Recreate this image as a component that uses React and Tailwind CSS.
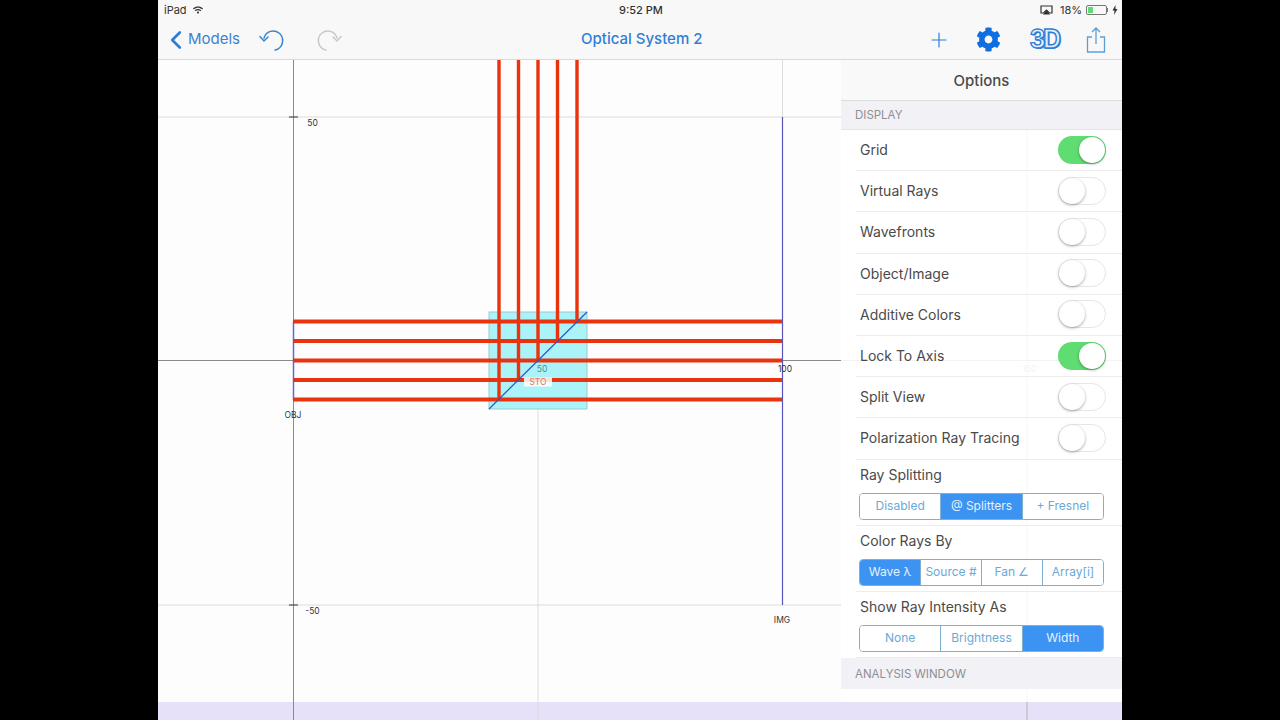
import React from "react";
import { FaCog, FaWifi } from "react-icons/fa";
import { ChevronLeft, Plus } from "lucide-react";

const rayY = [321.5, 341, 360.5, 380, 399.5];
const rayX = [
  { x: 499, end: 400 },
  { x: 518.5, end: 380 },
  { x: 538, end: 361 },
  { x: 557.5, end: 341 },
  { x: 577, end: 322 },
];

function Toggle({ on }) {
  return (
    <div className={on
      ? "relative h-[28px] w-[48px] rounded-full bg-[#5fdc72]"
      : "relative h-[28px] w-[48px] rounded-full border border-[#e6e6e6] bg-white"}>
      <div className={on
        ? "absolute right-[1px] top-[1px] h-[26px] w-[26px] rounded-full bg-white shadow-[0_1px_3px_rgba(0,0,0,0.35)]"
        : "absolute left-0 top-0 h-[26px] w-[26px] rounded-full bg-white shadow-[0_1px_3px_rgba(0,0,0,0.35)]"} />
    </div>
  );
}

function ToggleRow({ label, on }) {
  return (
    <div className="ml-[15px] flex h-[41.2px] items-center justify-between border-b border-[#ececec] pb-[1px] pl-[4px] pr-[16px]">
      <span className="text-[14px] text-[#4a4a4a]">{label}</span>
      <Toggle on={on} />
    </div>
  );
}

function Segments({ label, items, active }) {
  return (
    <div className="ml-[15px] flex h-[66px] flex-col border-b border-[#ececec] pl-[3px] pr-[18px]">
      <div className="flex h-[33px] items-center pb-[3px] pl-[1px] text-[14px] text-[#4a4a4a]">{label}</div>
      <div className="flex h-[27px] overflow-hidden rounded-[4px] border border-[#7fb0cf]">
        {items.map((item, i) => (
          <div
            key={item}
            className={
              (i === active ? "bg-[#3d93f2] text-[#e6f2ff] " : "bg-white text-[#6aa9d8] ") +
              (i > 0 ? "border-l border-[#7fb0cf] " : "") +
              "flex flex-1 items-center justify-center text-[12px]"
            }
          >
            {item}
          </div>
        ))}
      </div>
    </div>
  );
}

function Drawing() {
  return (
    <svg className="absolute inset-0 h-[660px] w-[964px]" viewBox="158 60 964 660">
      <rect x="158" y="60" width="964" height="660" fill="#fefdfe" />
      <rect x="158" y="702" width="964" height="18" fill="#e6e0f8" />

      {/* grid */}
      <g stroke="#dcdcdc" strokeWidth="1">
        <line x1="158" y1="117" x2="841" y2="117" />
        <line x1="158" y1="605" x2="841" y2="605" />
        <line x1="538" y1="60" x2="538" y2="720" />
        <line x1="782.5" y1="60" x2="782.5" y2="117" />
        <line x1="1027" y1="60" x2="1027" y2="720" stroke="#b4b4b4" />
      </g>
      <g stroke="#8a8a8a" strokeWidth="1">
        <line x1="293.5" y1="60" x2="293.5" y2="720" />
        <line x1="158" y1="360.5" x2="1122" y2="360.5" />
        <line x1="289" y1="117" x2="298" y2="117" stroke="#333" />
        <line x1="289" y1="605" x2="298" y2="605" stroke="#333" />
      </g>

      {/* beam splitter */}
      <rect x="489" y="312" width="98" height="97" fill="#aaf3f8" stroke="#9cc9cf" strokeWidth="1" />

      {/* object and image planes */}
      <line x1="293.5" y1="321" x2="293.5" y2="400" stroke="#6a62d8" strokeWidth="1.5" />
      <line x1="782.5" y1="117" x2="782.5" y2="605" stroke="#5a55b8" strokeWidth="1.2" />

      {/* rays */}
      <g stroke="#e8330e" strokeWidth="4.2">
        {rayX.map((r) => (
          <line key={r.x} x1={r.x} y1="60" x2={r.x} y2={r.end} strokeWidth="3.4" />
        ))}
        {rayY.map((y) => (
          <line key={y} x1="293" y1={y} x2="782" y2={y} />
        ))}
      </g>
      <line x1="489" y1="409" x2="587" y2="312" stroke="#2f55c8" strokeWidth="1.2" />

      {/* labels */}
      <g fontFamily="Inter, sans-serif" fontSize="8.5" fill="#333" textAnchor="middle">
        <text x="312.5" y="126">50</text>
        <text x="312.5" y="614">-50</text>
        <text x="293" y="418">OBJ</text>
        <text x="782" y="623">IMG</text>
        <text x="542" y="372" fill="#4b8f99">50</text>
        <text x="785" y="372">100</text>
        <text x="1029.5" y="372" fill="#777">150</text>
        <rect x="524" y="377.500" width="28" height="9" fill="#fff" opacity="0.85" />
        <text x="538" y="385" fill="#e8705a">STO</text>
      </g>
    </svg>
  );
}

export default function App() {
  return (
    <div className="flex h-[720px] w-[1280px] justify-center overflow-hidden bg-black font-['Inter',sans-serif]">
      <div className="flex w-[964px] flex-col">
        {/* status bar */}
        <div className="relative flex h-[20px] items-center justify-between bg-[#f8f8f8] pl-[6px] pr-[4px] text-[11px] text-[#333]">
          <div className="flex items-center gap-[6px]">
            <span>iPad</span>
            <FaWifi className="text-[10px]" />
          </div>
          <span className="absolute left-[461px] font-medium">9:52 PM</span>
          <div className="flex items-center gap-[4px]">
            <svg width="13" height="10" viewBox="0 0 13 10">
              <path d="M1 1h11v7H9.5L6.5 5 3.500 8H1z" fill="none" stroke="#333" strokeWidth="1.200" />
              <path d="M6.500 5l3.500 4.500H3z" fill="#333" />
            </svg>
            <span className="ml-[3px]">18%</span>
            <div className="flex items-center">
              <div className="h-[10px] w-[21px] rounded-[2px] border border-[#777] p-[1px]">
                <div className="h-full w-[5px] bg-[#5fdc72]" />
              </div>
              <div className="h-[4px] w-[1px] bg-[#777]" />
            </div>
            <svg width="6" height="10" viewBox="0 0 6 10">
              <path d="M3.500 0L0.500 5.500h2L2 10l3.500-6h-2z" fill="#333" />
            </svg>
          </div>
        </div>

        {/* toolbar */}
        <div className="relative flex h-[40px] items-center border-b border-[#d9d9d9] bg-[#f8f8f8] text-[#2f7fd6]">
          <ChevronLeft className="ml-[3px] h-[30px] w-[30px]" strokeWidth={2.2} />
          <span className="ml-[-3px] text-[15px] text-[#3b82d0]">Models</span>
          <svg className="ml-[18px]" width="30" height="26" viewBox="0 0 30 26" fill="none" strokeWidth="1.500" strokeLinecap="round" stroke="#3b82d0">
            <path d="M6 11C8 4 16 2 21 6c5 4 5 12-1 16-1 .5-2 1-3 1" />
            <path d="M2 9.500l4 4.500 4-4" />
          </svg>
          <svg className="ml-[25px]" width="30" height="26" viewBox="0 0 30 26" fill="none" strokeWidth="1.500" strokeLinecap="round" stroke="#c8c8c8">
            <path d="M24 11C22 4 14 2 9 6c-5 4-5 12 1 16 1 .5 2 1 3 1" />
            <path d="M28 9.500l-4 4.500-4-4" />
          </svg>
          <span className="absolute left-[423px] text-[15px] font-medium text-[#2f7fd6]">Optical System 2</span>
          <div className="ml-auto flex items-center">
            <Plus className="h-[24px] w-[24px]" strokeWidth={1.200} />
            <FaCog className="ml-[25px] h-[25px] w-[25px] text-[#0f6fe0]" />
            <span className="ml-[28px] w-[30px] text-center text-[25px] font-bold leading-none tracking-[-2.5px] text-[#e4f0fb] [-webkit-text-stroke:1.400px_#2f7fd6] [text-shadow:1px_1px_0_#2f7fd6]">3D</span>
            <svg className="ml-[27px] mr-[16px]" width="20" height="26" viewBox="0 0 20 26" fill="none" stroke="#5b9fd8" strokeWidth="1.300">
              <path d="M6 10H1.500v15h17V10H14" />
              <path d="M10 17V1.500M6 5l4-4 4 4" />
            </svg>
          </div>
        </div>

        {/* canvas with options panel on top */}
        <div className="relative flex-1">
          <Drawing />
          <div className="absolute right-0 top-0 flex h-[642px] w-[281px] flex-col bg-white/90">
            <div className="flex h-[41px] items-center justify-center border-b border-[#dcdcdc] bg-[#f8f8f8]/90 pt-[2px] text-[15px] font-medium text-[#4a4a4a]">
              Options
            </div>
            <div className="flex h-[29px] items-center border-b border-[#e4e4e4] bg-[#f1f0f4]/90 pl-[14px] pt-[1px] text-[11.5px] text-[#8e8e93]">
              DISPLAY
            </div>
            <ToggleRow label="Grid" on />
            <ToggleRow label="Virtual Rays" />
            <ToggleRow label="Wavefronts" />
            <ToggleRow label="Object/Image" />
            <ToggleRow label="Additive Colors" />
            <ToggleRow label="Lock To Axis" on />
            <ToggleRow label="Split View" />
            <ToggleRow label="Polarization Ray Tracing" />
            <Segments label="Ray Splitting" items={["Disabled", "@ Splitters", "+ Fresnel"]} active={1} />
            <Segments label="Color Rays By" items={["Wave λ", "Source #", "Fan ∠", "Array[i]"]} active={0} />
            <Segments label="Show Ray Intensity As" items={["None", "Brightness", "Width"]} active={2} />
            <div className="flex h-[31px] items-center bg-[#f1f0f4]/90 pl-[14px] pt-[3px] text-[11.5px] text-[#8e8e93]">
              ANALYSIS WINDOW
            </div>
          </div>
        </div>
      </div>
    </div>
  );
}
